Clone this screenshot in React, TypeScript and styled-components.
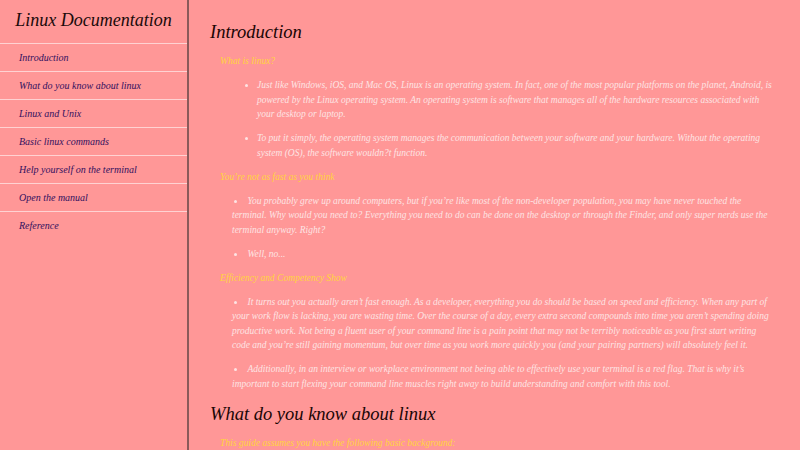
import React from 'react';
import styled, { createGlobalStyle } from 'styled-components';

const GlobalStyle = createGlobalStyle`
  html, body {
    margin: 0;
    padding: 0;
    background: #ff9797;
    font-family: "Liberation Serif", "Times New Roman", serif;
    font-style: italic;
    overflow: hidden;
  }
`;

const Page = styled.div`
  display: flex;
  height: 450px;
  overflow: hidden;
`;

const Nav = styled.nav`
  width: 187px;
  flex-shrink: 0;
  border-right: 2px solid #8a5a5a;
  height: 100%;
`;

const NavTitle = styled.header`
  font-size: 18px;
  color: #1a0a0a;
  text-align: center;
  padding: 8px 0 10px;
  line-height: 25px;
`;

const NavList = styled.ul`
  list-style: none;
  margin: 0;
  padding: 0;
`;

const NavItem = styled.li`
  border-top: 1px solid #ffd2d2;
  height: 27px;
  display: flex;
  align-items: center;
  padding-left: 19px;
`;

const NavLink = styled.a`
  font-size: 10px;
  color: #33105e;
  text-decoration: none;
`;

const Main = styled.main`
  flex: 1;
  padding: 0 26px 0 21px;
  overflow: hidden;
`;

const Section = styled.section``;

const Heading = styled.header<{ $first?: boolean }>`
  font-size: 18.5px;
  color: #1a0505;
  margin: ${p => (p.$first ? '20px' : '11px')} 0 0;
  line-height: 24px;
`;

const SubHeading = styled.h4<{ $gap?: number }>`
  font-size: 9.5px;
  font-weight: normal;
  color: #ffd43d;
  margin: ${p => p.$gap ?? 10}px 0 0 10px;
  line-height: 14px;
`;

const List = styled.ul<{ $inside?: boolean }>`
  margin: 10px 0 0;
  padding: 0 0 0 ${p => (p.$inside ? 22 : 47)}px;
  list-style-position: ${p => (p.$inside ? 'inside' : 'outside')};
  color: #fde4e4;
`;

const Item = styled.li<{ $inside?: boolean }>`
  font-size: 9.5px;
  line-height: 14.5px;
  margin-bottom: 9.5px;
  text-indent: ${p => (p.$inside ? 2 : 0)}px;
`;

const navLinks = [
  'Introduction',
  'What do you know about linux',
  'Linux and Unix',
  'Basic linux commands',
  'Help yourself on the terminal',
  'Open the manual',
  'Reference',
];

export default function App() {
  return (
    <>
      <GlobalStyle />
      <Page>
        <Nav>
          <NavTitle>Linux Documentation</NavTitle>
          <NavList>
            {navLinks.map(l => (
              <NavItem key={l}>
                <NavLink href="#">{l}</NavLink>
              </NavItem>
            ))}
          </NavList>
        </Nav>
        <Main>
          <Section>
            <Heading $first>Introduction</Heading>
            <SubHeading $gap={10}>What is linux?</SubHeading>
            <List>
              <Item>
                Just like Windows, iOS, and Mac OS, Linux is an operating system. In fact, one of the most popular
                platforms on the planet, Android, is powered by the Linux operating system. An operating system is
                software that manages all of the hardware resources associated with your desktop or laptop.
              </Item>
              <Item>
                To put it simply, the operating system manages the communication between your software and your
                hardware. Without the operating system (OS), the software wouldn?t function.
              </Item>
            </List>
            <SubHeading $gap={0}>You’re not as fast as you think</SubHeading>
            <List $inside>
              <Item $inside>
                You probably grew up around computers, but if you’re like most of the non-developer population,
                you may have never touched the terminal. Why would you need to? Everything you need to do can be done
                on the desktop or through the Finder, and only super nerds use the terminal anyway. Right?
              </Item>
              <Item $inside>Well, no...</Item>
            </List>
            <SubHeading $gap={0}>Efficiency and Competency Show</SubHeading>
            <List $inside>
              <Item $inside>
                It turns out you actually aren’t fast enough. As a developer, everything you do should be based on
                speed and efficiency. When any part of your work flow is lacking, you are wasting time. Over the course
                of a day, every extra second compounds into time you aren’t spending doing productive work. Not being a
                fluent user of your command line is a pain point that may not be terribly noticeable as you first start
                writing code and you’re still gaining momentum, but over time as you work more quickly you (and your
                pairing partners) will absolutely feel it.
              </Item>
              <Item $inside>
                Additionally, in an interview or workplace environment not being able to effectively use your
                terminal is a red flag. That is why it’s important to start flexing your command line muscles right
                away to build understanding and comfort with this tool.
              </Item>
            </List>
          </Section>
          <Section>
            <Heading>What do you know about linux</Heading>
            <SubHeading $gap={10}>This guide assumes you have the following basic background:</SubHeading>
          </Section>
        </Main>
      </Page>
    </>
  );
}
